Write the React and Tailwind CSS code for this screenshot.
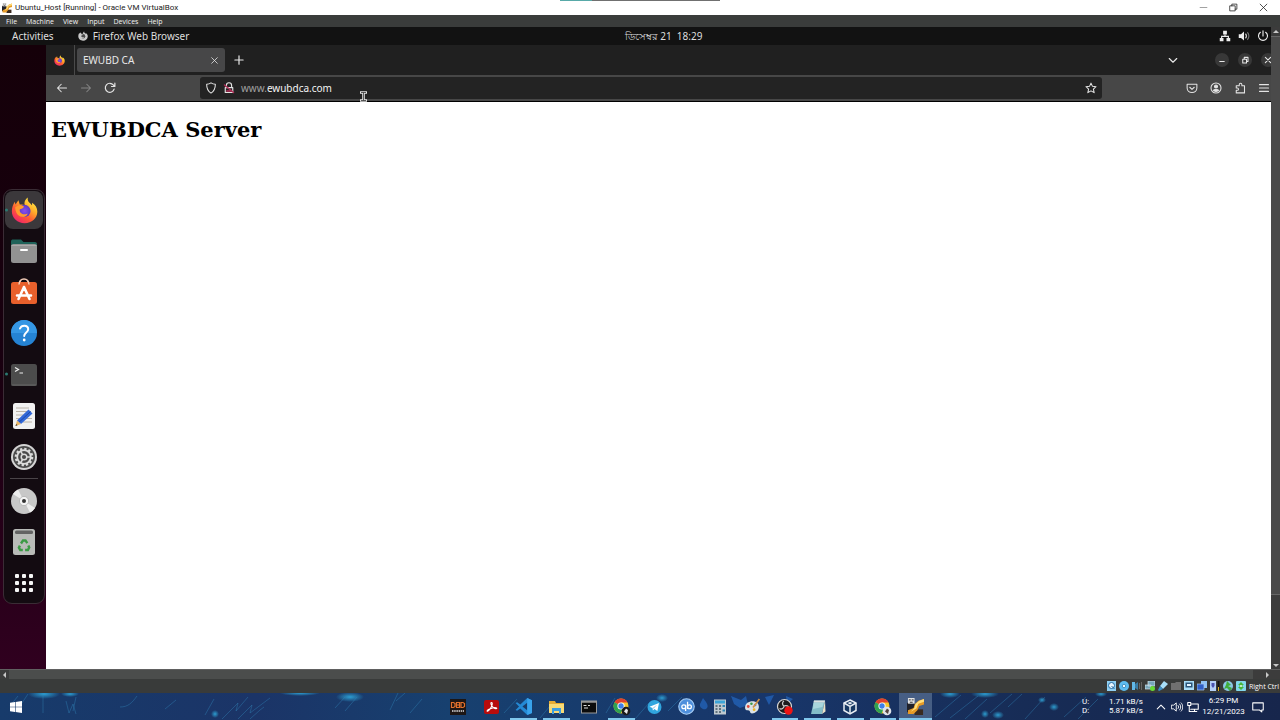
import clsx from "clsx";

const Firefox = ({ size, mono = false }) => (
  <svg width={size} height={size} viewBox="0 0 32 32" aria-hidden="true">
    <defs>
      <linearGradient id="fxBody" x1="0.85" y1="0.05" x2="0.2" y2="0.95">
        <stop offset="0" stopColor="#fff04a" />
        <stop offset="0.35" stopColor="#ffb02a" />
        <stop offset="0.65" stopColor="#ff5b33" />
        <stop offset="1" stopColor="#f0246b" />
      </linearGradient>
      <radialGradient id="fxGlobe">
        <stop offset="0" stopColor="#8a4df0" />
        <stop offset="1" stopColor="#5a3bc4" />
      </radialGradient>
    </defs>
    <path
      fill={mono ? "#c9c9c9" : "url(#fxBody)"}
      d="M20 .5c-.8 2.400.2 4.600 2 6.200 1.200 1 2 2 2.500 3.200.6-1 .7-2 .4-3.200C29 9 31.200 13 31.200 17.500 31 25.500 24.500 31 16.200 31 7.800 31 1 25 1 16.800 1 12 2.600 8.500 4.500 5.500l.8 3.400L8.800 3.800l1.600 5.100c2.500-.4 4.500 0 6.200 1C15 7 16.500 3 20 .5z"
    />
    <circle cx="16" cy="16.500" r="7.200" fill={mono ? "#4a4a4a" : "url(#fxGlobe)"} />
    <path
      fill={mono ? "#c9c9c9" : "#ff9a2e"}
      d="M5 12c3-2 7-2.500 10.500-.8-1 2.300-3.200 2.800-5 3.300-.6 2 .3 4.500 3 5.500 2.800.9 5.200-.2 6.300-.5-.8 3-3.800 4.500-6.800 4C8 22.700 5 18 5 12z"
    />
  </svg>
);

const FilesIcon = () => (
  <svg width="28" height="28" viewBox="0 0 28 28" aria-hidden="true">
    <path fill="#1f6259" d="M1 4.500C1 3 2 2.500 3 2.500h8l2.500 2.500H25c1.500 0 2 1 2 2V14H1z" />
    <rect x="1" y="7" width="26" height="19" rx="2.500" fill="#929292" />
    <path d="M1.500 8.500h25" stroke="#aaa" />
    <path d="M11 13h6" stroke="#fff" strokeWidth="2" strokeLinecap="round" />
  </svg>
);

const SoftwareIcon = () => (
  <svg width="28" height="28" viewBox="0 0 28 28" aria-hidden="true">
    <path d="M9 7c0-3.500 2-6 5-6s5 2.500 5 6" fill="none" stroke="#f3cdb8" strokeWidth="1.500" />
    <rect x="1" y="4" width="26" height="22" rx="2.500" fill="#e8602c" />
    <path d="M9 6.500c0-2 1-3.500 2-4.500M19 6.500c0-2-1-3.500-2-4.500" fill="none" stroke="#f3cdb8" strokeWidth="1.500" />
    <path d="M14 9L8.500 21M14 9L19.500 21M7 17.500h14" fill="none" stroke="#fff" strokeWidth="2.600" strokeLinecap="round" />
  </svg>
);

const HelpIcon = () => (
  <svg width="28" height="28" viewBox="0 0 28 28" aria-hidden="true">
    <circle cx="14" cy="14" r="13" fill="#2583d3" />
    <path d="M1 14a13 13 0 0 1 26 0z" fill="#3597e4" />
    <path d="M10 9.500c.8-2 2.300-2.800 4.200-2.800 2.500 0 4 1.500 4 3.500 0 3.200-4 3.300-4 6.800" fill="none" stroke="#fff" strokeWidth="2" strokeLinecap="round" />
    <circle cx="14.200" cy="21" r="1.400" fill="#fff" />
  </svg>
);

const TerminalIcon = () => (
  <svg width="28" height="28" viewBox="0 0 28 28" aria-hidden="true">
    <rect x="1" y="4" width="26" height="22" rx="2.500" fill="#4c4c4c" />
    <path d="M1.500 25h25" stroke="#666" />
    <path d="M5 7.500l3.500 2-3.500 2M9.500 13H13" fill="none" stroke="#eee" strokeWidth="1.200" />
  </svg>
);

const EditorIcon = () => (
  <svg width="28" height="28" viewBox="0 0 28 28" aria-hidden="true">
    <rect x="3" y="2" width="22" height="26" rx="2.500" fill="#f1f1f1" />
    <path d="M6 7h13M6 10.500h15M6 14h8M6 17.500h5M15 17.500h7M13 21h9" stroke="#b9b2a8" />
    <path d="M18.500 8.500l4 4L11 23l-4-3.500z" fill="#3268d8" />
    <path d="M20.500 10.500L9 21.300" stroke="#1d49a8" />
    <path d="M7 19.500L11 23l-5.500 2z" fill="#e8b565" />
    <path d="M5.500 25l.7-2 1.300 1.200z" fill="#333" />
  </svg>
);

const SettingsIcon = () => (
  <svg width="28" height="28" viewBox="0 0 28 28" aria-hidden="true">
    <circle cx="14" cy="15" r="13" fill="#d4d4d4" />
    <circle cx="14" cy="15" r="11" fill="#4b4b4b" />
    <circle cx="14" cy="15" r="8" fill="none" stroke="#dcdcdc" strokeWidth="2.600" strokeDasharray="2.200 1.990" />
    <circle cx="14" cy="15" r="6.800" fill="none" stroke="#dcdcdc" strokeWidth="1.800" />
    <circle cx="14" cy="15" r="2.800" fill="none" stroke="#dcdcdc" strokeWidth="1.500" />
    <path d="M17 15h4M12.500 12.400l-2-3.400M12.500 17.600l-2 3.400" stroke="#dcdcdc" strokeWidth="1.500" />
  </svg>
);

const DiscIcon = () => (
  <svg width="28" height="28" viewBox="0 0 28 28" aria-hidden="true">
    <circle cx="14" cy="14" r="13" fill="#c8c8c8" />
    <path d="M14 14L3 7a13 13 0 0 1 5-4.500zM14 14l11 7a13 13 0 0 1-5 4.500z" fill="#ededed" />
    <circle cx="14" cy="14" r="4.600" fill="#f4f4f4" stroke="#aaa" strokeWidth="0.700" />
    <circle cx="14" cy="14" r="2" fill="#333" />
  </svg>
);

const TrashIcon = () => (
  <svg width="28" height="28" viewBox="0 0 28 28" aria-hidden="true">
    <rect x="3" y="1" width="22" height="26" rx="2.500" fill="#b9bbb8" />
    <rect x="5" y="2.500" width="18" height="3.500" rx="1.500" fill="#636363" />
    <g fill="none" stroke="#3c9a45" strokeWidth="2.400">
      <path d="M11 15.500l2-3h2.500l1.800 2.600" />
      <path d="M18.300 17.500l.9 2-1.300 2.500h-2.800" />
      <path d="M12.800 22h-2.500l-1.400-2.400 1-2" />
    </g>
  </svg>
);

const GridIcon = () => (
  <svg width="28" height="28" viewBox="0 0 28 28" aria-hidden="true" fill="#f5f5f5">
    {[5, 12, 19].map((y) =>
      [5, 12, 19].map((x) => <rect key={`${x}-${y}`} x={x} y={y} width="4" height="4" rx="1" />)
    )}
  </svg>
);

const dockItems = [
  { name: "Firefox Web Browser", icon: <Firefox size={27} />, active: true, running: true },
  { name: "Files", icon: <FilesIcon /> },
  { name: "Ubuntu Software", icon: <SoftwareIcon /> },
  { name: "Help", icon: <HelpIcon /> },
  { name: "Terminal", icon: <TerminalIcon />, running: true },
  { name: "Text Editor", icon: <EditorIcon /> },
  { name: "Settings", icon: <SettingsIcon />, last: true },
  { name: "Disc", icon: <DiscIcon /> },
  { name: "Trash", icon: <TrashIcon /> },
  { name: "Show Applications", icon: <GridIcon /> },
];

// small line icons, all on a 16px grid
const Line = ({ size = 12, width = 1.4, className, children }) => (
  <svg
    width={size}
    height={size}
    viewBox="0 0 16 16"
    fill="none"
    stroke="currentColor"
    strokeWidth={width}
    strokeLinecap="round"
    strokeLinejoin="round"
    className={className}
    aria-hidden="true"
  >
    {children}
  </svg>
);

const VBoxLogo = ({ size }) => (
  <svg width={size} height={size} viewBox="0 0 18 18" aria-hidden="true">
    <path d="M0 5h7l3 4-4 6H0z" fill="#20222b" />
    <path d="M8 12h9v6H8z" fill="#3a2a20" />
    <path d="M1 0h7v6H1z" fill="#e4e4e4" />
    <path d="M2 2h2M5 2h2M3 4.500h3" stroke="#333" />
    <path d="M18 1v6l-5 1.500-2 4.500-4 4H1v-4l6-2.500 1-3.500 4-4z" fill="#e79a25" />
    <path d="M18 1v3l-6 2-2 5-6 3.500 4-4.500 1-4 4-3z" fill="#ffdf7a" />
  </svg>
);

const Chrome = ({ dark }) => (
  <svg width="18" height="18" viewBox="0 0 18 18" aria-hidden="true">
    <circle cx="8" cy="8" r="7.500" fill="#f4c52c" />
    <path d="M8 8L1.500 4.300A7.500 7.500 0 0 1 14.600 4.500H8z" fill="#e0402f" />
    <path d="M1.500 4.300A7.500 7.500 0 0 0 7.500 15.500L10 10.500 8 8z" fill="#2ea352" />
    <circle cx="8" cy="8" r="3.600" fill="#fff" />
    <circle cx="8" cy="8" r="2.700" fill="#3d7fe8" />
    <circle cx="13" cy="13" r="4.300" fill={dark ? "#1b1b1b" : "#dfe3e8"} />
    <path d="M11 13.500l2-3 2 1.500-1 4z" fill={dark ? "#e9e9e9" : "#54453f"} />
  </svg>
);

const taskItems = [
  {
    name: "Game launcher",
    icon: (
      <svg width="16" height="16" viewBox="0 0 16 16" aria-hidden="true">
        <rect width="16" height="16" fill="#1d1614" />
        <path d="M1.500 3.500h2l1.500 1v3l-1.500 1h-2zM6.500 3.500h3v5h-3zM6.500 6h3M11 3.500h2l1.500 1v3l-1.500 1h-2z" fill="none" stroke="#e0702c" strokeWidth="1.200" />
        <path d="M2 12h12" stroke="#ddd" strokeDasharray="1.500 .7" strokeWidth="1.500" />
      </svg>
    ),
  },
  {
    name: "Acrobat Reader",
    icon: (
      <svg width="16" height="16" viewBox="0 0 16 16" aria-hidden="true">
        <rect x="1" y="1" width="15" height="14" rx="2" fill="#b70c0c" />
        <path d="M8.500 3.500c-1.500 0 0 3.500 2 5.200s4 1 3 .3c-1.500-1-6 .3-8 1.500s-1.700 2.200-.5 1.500C7 11 9.500 6 9.300 4.500 9.200 4 9 3.500 8.500 3.500z" fill="none" stroke="#fff" strokeWidth="1.100" />
      </svg>
    ),
  },
  {
    name: "Visual Studio Code",
    open: true,
    icon: (
      <svg width="17" height="17" viewBox="0 0 16 16" aria-hidden="true">
        <path d="M11.500 0L16 2v12l-4.500 2L5 9.800 2 12 .5 11.200 3.800 8 .5 4.800 2 4l3 2.200z" fill="#2489d4" />
        <path d="M11.500 4.500v7L7 8z" fill="#173a68" />
        <path d="M11.500 0L16 2v12l-4.500 2z" fill="#38a3ec" />
      </svg>
    ),
  },
  {
    name: "File Explorer",
    open: true,
    icon: (
      <svg width="16" height="16" viewBox="0 0 16 16" aria-hidden="true">
        <path d="M1 2h6l1 2h8v10H1z" fill="#e7ad35" />
        <path d="M1 5h15v9H1z" fill="#f9db76" />
        <path d="M4 9h9v6h-2v-3H6v3H4z" fill="#3d9fe0" />
      </svg>
    ),
  },
  {
    name: "Command Prompt",
    icon: (
      <svg width="16" height="16" viewBox="0 0 16 16" aria-hidden="true">
        <rect x=".5" y="2" width="15" height="12" fill="#0b0b0b" stroke="#9a9a9a" />
        <path d="M1 3h14" stroke="#ddd" />
        <path d="M2.500 6.500h3M7 6.500h2M3 9h4" stroke="#ddd" />
      </svg>
    ),
  },
  { name: "Google Chrome", open: true, icon: <Chrome dark /> },
  {
    name: "Telegram",
    icon: (
      <svg width="16" height="16" viewBox="0 0 16 16" aria-hidden="true">
        <circle cx="8.500" cy="8" r="7" fill="#31a6de" />
        <path d="M3.500 7.800l9.500-3.700-1.600 8-3-2-1.500 1.500-.4-2.600z" fill="#fff" />
        <path d="M6.500 9l4.500-3.300-3.200 4" fill="#a9cfe6" />
      </svg>
    ),
  },
  {
    name: "qBittorrent",
    icon: (
      <svg width="17" height="17" viewBox="0 0 16 16" aria-hidden="true">
        <circle cx="8" cy="8" r="7.300" fill="#4e8fdc" stroke="#a7cdf3" />
        <g fill="none" stroke="#fff" strokeWidth="1.200">
          <circle cx="5.400" cy="8.200" r="1.800" />
          <path d="M7.200 6.300v6M9 3.500v6.800" />
          <circle cx="10.800" cy="8.200" r="1.800" />
        </g>
      </svg>
    ),
  },
  {
    name: "Calculator",
    icon: (
      <svg width="16" height="16" viewBox="0 0 16 16" aria-hidden="true">
        <rect x="2" y=".5" width="12" height="15" fill="#bfc9d0" />
        <rect x="3" y="1.500" width="10" height="3" fill="#3ca5d8" />
        <path d="M3.500 7h2M7 7h2M3.500 10h2M7 10h2M3.500 13h2M7 13h2" stroke="#61727d" strokeWidth="1.800" />
        <path d="M10.500 7h2.500M10.500 11.500h2.500" stroke="#2c86b6" strokeWidth="2.200" />
      </svg>
    ),
  },
  {
    name: "Paint",
    icon: (
      <svg width="17" height="17" viewBox="0 0 16 16" aria-hidden="true">
        <path d="M1 9c0-4 3.500-6 7-6s6 2 6 5.500-3.500 6-6.500 6c-2 0-1.500-2-2.500-2.500S1 12.500 1 9z" fill="#dbe2e6" />
        <circle cx="4" cy="8" r="1.300" fill="#e24a3c" />
        <circle cx="7" cy="5.500" r="1.200" fill="#3d9b4a" />
        <circle cx="10.500" cy="6.500" r="1.200" fill="#3b78d0" />
        <circle cx="9.500" cy="11" r="1.300" fill="#edb528" />
        <path d="M14.500 1L8.500 9" stroke="#cf9146" strokeWidth="1.500" />
      </svg>
    ),
  },
  {
    name: "OBS Studio",
    open: true,
    icon: (
      <svg width="18" height="18" viewBox="0 0 18 18" aria-hidden="true">
        <circle cx="8.500" cy="8.500" r="7" fill="#1c1c1e" stroke="#d5d5d5" strokeWidth="1.200" />
        <path d="M8 3c-2 1-2 4 0 5 2-1 5 0 5 2M8 8c0 2-2.500 4-4.500 2.500" fill="none" stroke="#ccc" strokeWidth="1.300" />
        <circle cx="12.500" cy="12.500" r="4.200" fill="#ee1414" />
      </svg>
    ),
  },
  {
    name: "Notepad",
    open: true,
    icon: (
      <svg width="16" height="16" viewBox="0 0 16 16" aria-hidden="true">
        <path d="M4 1.500h11L12 15H1z" fill="#84bdc8" />
        <path d="M4 1.500h11l-.5 2h-11z" fill="#d9dfe0" />
        <path d="M3.500 4h10l-1 4-9.500 2z" fill="#a9d6dc" />
        <path d="M12 15l3-13.500.5 11z" fill="#e9e2c8" />
      </svg>
    ),
  },
  {
    name: "VirtualBox Manager",
    open: true,
    icon: (
      <svg width="16" height="16" viewBox="0 0 16 16" aria-hidden="true">
        <path d="M8 1l6 3v7.500L8 15l-6-3.500V4z" fill="#173863" stroke="#e8edf4" strokeWidth="1.500" />
        <path d="M2 4l6 3.500L14 4M8 7.500V15" fill="none" stroke="#e8edf4" strokeWidth="1.500" />
        <path d="M5.500 4L8 3l2.500 1L8 5.500z" fill="#e8edf4" />
      </svg>
    ),
  },
  { name: "Google Chrome, second profile", open: true, icon: <Chrome /> },
  { name: "Ubuntu_Host", open: true, active: true, icon: <VBoxLogo size={17} /> },
];

const statusIcons = [
  {
    name: "Hard disks",
    draw: (
      <>
        <rect x="1" width="9" height="10" fill="#8fd0f4" />
        <circle cx="5.500" cy="4.500" r="3" fill="#e8f6ff" stroke="#2369a0" />
        <path d="M5.500 5l3 3" stroke="#2369a0" />
      </>
    ),
  },
  {
    name: "Optical drives",
    draw: (
      <>
        <circle cx="5" cy="5" r="5" fill="#5dbcf0" />
        <circle cx="5" cy="5" r="1.700" fill="#eaf8ff" stroke="#2475ab" strokeWidth=".7" />
      </>
    ),
  },
  {
    name: "Audio",
    draw: (
      <>
        <path d="M0 1h3v8H0z" fill="#62b8e7" />
        <path d="M3 3l3-2v8L3 7z" fill="#397ca5" />
        <path d="M7.500 2v6M9.500 1v8" stroke="#666" />
      </>
    ),
  },
  {
    name: "Network",
    draw: (
      <>
        <path d="M3 0h7v5H3zM0 4h6v4H0z" fill="#78a7bb" stroke="#d5e7ef" strokeWidth=".7" />
        <circle cx="7.500" cy="7.500" r="2.500" fill="#67dc35" />
      </>
    ),
  },
  {
    name: "USB devices",
    draw: (
      <>
        <path d="M6 0l4 3-5 5-3-3z" fill="#a9e0fa" />
        <path d="M2 5l3 3-4 2-1-1z" fill="#3c8fc6" />
      </>
    ),
  },
  { name: "Shared folders", draw: <path d="M0 2h4l1-1h5v8H0z" fill="#707070" /> },
  {
    name: "Display",
    draw: (
      <>
        <rect width="10" height="9" fill="#a9ddf8" />
        <rect x="1.500" y="1.500" width="7" height="5" fill="#2c5578" />
        <path d="M3 4h4" stroke="#e5f5ff" strokeWidth="2" />
      </>
    ),
  },
  {
    name: "Recording",
    draw: (
      <>
        <path d="M4 0h6v7H4z" fill="#8fc2f5" />
        <path d="M0 3h7v6H0z" fill="#3160c7" stroke="#a3c8f5" strokeWidth=".7" />
      </>
    ),
  },
  {
    name: "Processor",
    draw: (
      <>
        <rect width="6" height="10" fill="#b4cff7" />
        <path d="M1.500 2h3v3L3 7 1.500 5z" fill="#4a53af" />
        <path d="M8.500 0v10" stroke="#111" strokeWidth="2" />
        <path d="M8.500 6v4" stroke="#e0b020" strokeWidth="1" />
      </>
    ),
  },
  {
    name: "Mouse integration",
    draw: (
      <>
        <circle cx="5" cy="5" r="5" fill="#8cc9e6" />
        <path d="M4 0l4 4-3 1 4 2-2 3-3-3-3 1 2-4z" fill="#3fae3b" />
      </>
    ),
  },
  {
    name: "Keyboard capture",
    draw: (
      <>
        <rect width="10" height="10" rx="1" fill="#82d8ec" />
        <path d="M5 1l3 3-1.500 0v2H8L5 9 2 6h1.500V4H2z" fill="#46b63a" />
        <circle cx="5" cy="5" r="1" fill="#e8ffe8" />
      </>
    ),
  },
];

function HostTitleBar() {
  return (
    <header className="relative flex h-[15px] shrink-0 items-center bg-white pl-[2px] pr-[2px]">
      <VBoxLogo size={10} />
      <h1 className="ml-[3px] font-['Roboto',sans-serif] text-[8px] leading-none text-[#222]">
        Ubuntu_Host [Running] - Oracle VM VirtualBox
      </h1>
      <div className="absolute left-1/2 top-0 flex h-px w-40 -translate-x-1/2 bg-[#707070]">
        <span className="h-px w-8 bg-[#58a9a8]" />
      </div>
      <div className="ml-auto flex text-[#222]">
        <button aria-label="Minimize" className="flex w-[30px] justify-center">
          <Line size={9}><path d="M2 8h12" stroke="#888" /></Line>
        </button>
        <button aria-label="Restore" className="flex w-[30px] justify-center">
          <Line size={9}><path d="M2 5h9v9H2zM5 5V2h9v9h-3" /></Line>
        </button>
        <button aria-label="Close" className="flex w-[30px] justify-center">
          <Line size={9}><path d="M2 2l12 12M14 2L2 14" /></Line>
        </button>
      </div>
    </header>
  );
}

function MenuBar() {
  return (
    <nav className="flex h-3 shrink-0 items-center gap-[9px] bg-[#3a3c3b] pl-[6px] text-[7px] leading-none text-[#f2f2f2]">
      {["File", "Machine", "View", "Input", "Devices", "Help"].map((m) => (
        <button key={m}>{m}</button>
      ))}
    </nav>
  );
}

function GnomeBar() {
  return (
    <div className="grid h-[18px] shrink-0 grid-cols-[1fr_auto_1fr] items-center bg-[#121212] text-[10px] leading-none text-[#dedede]">
      <div className="flex items-center gap-6 pl-3">
        <button>Activities</button>
        <button className="flex items-center gap-[5px]">
          <Firefox size={10} mono />
          Firefox Web Browser
        </button>
      </div>
      {/* the guest screen is wider than the visible part, so its clock sits right of centre */}
      <button className="whitespace-pre pl-14">ডিসেম্বর 21  18:29</button>
      <div className="flex items-center justify-end gap-[7px] pr-[2px] text-[#eee]">
        <svg width="12" height="12" viewBox="0 0 16 16" fill="currentColor" aria-hidden="true">
          <path d="M5.500 1h5v5h-5zM1 10.500h5V15H1zM10 10.500h5V15h-5z" />
          <path d="M8 6v2.500M3.500 11V8.500h9V11" fill="none" stroke="currentColor" strokeWidth="1.500" />
        </svg>
        <svg width="12" height="12" viewBox="0 0 16 16" fill="currentColor" aria-hidden="true">
          <path d="M1 5.500h3L8 2v12l-4-3.500H1z" />
          <path d="M10 5c1.500 1.500 1.500 4.500 0 6" fill="none" stroke="currentColor" strokeWidth="1.500" />
          <path d="M12.500 3c2.700 2.700 2.700 7.300 0 10" fill="none" stroke="#777" strokeWidth="1.500" />
        </svg>
        <Line width={1.5}>
          <path d="M8 1v7M4.500 3a6 6 0 1 0 7 0" />
        </Line>
      </div>
    </div>
  );
}

function Dock() {
  return (
    <aside className="flex w-[46px] shrink-0 flex-col bg-linear-to-b from-[#150009] via-[#18000f] to-[#30001f] pl-[3px] pt-36">
      <nav className="flex w-[42px] flex-col items-center gap-[3px] rounded-[9px] border border-[#3a2c35] bg-[#130b11] py-px">
        {dockItems.map((item) => (
          <div key={item.name} className="contents">
            <button
              aria-label={item.name}
              className={clsx(
                "relative flex size-[38px] shrink-0 items-center justify-center rounded-lg",
                item.active && "bg-[#3b383b]"
              )}
            >
              {item.icon}
              {item.running && (
                <span className="absolute left-0 top-1/2 size-[3px] -translate-y-1/2 rounded-full bg-[#2b7a72]" />
              )}
            </button>
            {item.last && <hr className="w-7 border-[#4a4448]" />}
          </div>
        ))}
      </nav>
    </aside>
  );
}

function TabStrip() {
  return (
    <div className="flex h-[30px] shrink-0 items-center bg-[#202020] text-[#e8e8e8]">
      <button aria-label="Firefox View" className="flex h-full w-[29px] items-center justify-center border-r border-[#4a4a4a] pr-[2px]">
        <Firefox size={11} />
      </button>
      <div className="ml-[2px] flex h-6 w-[148px] items-center justify-between rounded-[3px] bg-[#474748] pl-[6px] pr-[6px] text-[10px]">
        <span>EWUBD CA</span>
        <button aria-label="Close tab">
          <Line size={9}><path d="M3 3l10 10M13 3L3 13" /></Line>
        </button>
      </div>
      <button aria-label="New tab" className="ml-2">
        <Line size={12} width={1.6}><path d="M8 2.500v11M2.500 8h11" /></Line>
      </button>
      <button aria-label="List all tabs" className="ml-auto mr-9">
        <Line size={12} width={1.5}><path d="M3 6l5 5 5-5" /></Line>
      </button>
      <div className="-mr-1 flex shrink-0 gap-[9px]">
        {[
          ["Minimize window", "M5 10h6"],
          ["Restore window", "M5 7h5v5H5zM7 7V4.500h5V10h-2"],
          ["Close window", "M4.500 4.500l7 7M11.500 4.500l-7 7"],
        ].map(([label, d]) => (
          <button key={label} aria-label={label} className="flex size-[14px] items-center justify-center rounded-full bg-[#383838]">
            <Line size={12}><path d={d} /></Line>
          </button>
        ))}
      </div>
    </div>
  );
}

function Toolbar() {
  return (
    <div className="flex h-[26px] shrink-0 items-center bg-[#474747] text-[#e4e4e4]">
      <div className="flex w-[154px] shrink-0 items-center gap-3 pl-[10px]">
        <button aria-label="Back">
          <Line><path d="M14 8H2M7 3L2 8l5 5" /></Line>
        </button>
        <button aria-label="Forward" className="text-[#858585]">
          <Line><path d="M2 8h12M9 3l5 5-5 5" /></Line>
        </button>
        <button aria-label="Reload">
          <Line width={1.6}><path d="M13.500 9.500A6 6 0 1 1 12.500 4L14 5.500M14.500 1.500v4.500H10" /></Line>
        </button>
      </div>
      <form className="relative flex h-[22px] flex-1 items-center rounded-[3px] bg-[#232323] pl-[5px] pr-[5px]">
        <Line width={1.4}><path d="M8 1.200c2 1.300 4 1.700 5.800 1.800 0 5.500-1.300 9.300-5.800 11.800C3.500 12.300 2.200 8.500 2.200 3 4 2.900 6 2.500 8 1.200z" /></Line>
        <Line width={1.5} className="ml-[6px]">
          <path d="M4.500 7.500V4.500a3.500 3.500 0 0 1 7 0v3M3 7.500h10V14H3z" />
          <path d="M2 4l12 10M5 12h6" stroke="#b32d58" strokeWidth="2" />
        </Line>
        <label htmlFor="address" className="ml-[6px] text-[10px] text-[#a0a0a0]">www.</label>
        <input
          id="address"
          type="text"
          defaultValue="ewubdca.com"
          className="min-w-0 flex-1 bg-transparent text-[10px] text-[#f4f4f4] outline-none"
        />
        <button type="button" aria-label="Bookmark this page">
          <Line><path d="M8 1.500l2 4.300 4.700.5-3.500 3.200 1 4.700L8 11.800l-4.200 2.400 1-4.700L1.300 6.300l4.700-.5z" /></Line>
        </button>
        <svg className="absolute left-40 top-[14px]" width="7" height="11" viewBox="0 0 7 11" aria-hidden="true">
          <path d="M0 1.500h7M3.500 1v9M0 9.500h7" stroke="#e4e4e4" strokeWidth="2.600" />
          <path d="M1 1.500h5M3.500 1v9M1 9.500h5" stroke="#4a4a4a" strokeWidth="0.900" />
        </svg>
      </form>
      <div className="flex w-[169px] shrink-0 items-center justify-end gap-3 pr-px">
        <button aria-label="Save to Pocket">
          <Line><path d="M1.500 3h13v5c0 3.500-3 6-6.500 6s-6.500-2.500-6.500-6zM5 7l3 2.800L11 7" /></Line>
        </button>
        <button aria-label="Account">
          <Line>
            <circle cx="8" cy="8" r="6.700" />
            <circle cx="8" cy="6" r="2" fill="currentColor" />
            <path d="M4.500 11c1-1.500 6-1.500 7 0-1 2-6 2-7 0z" fill="currentColor" />
          </Line>
        </button>
        <button aria-label="Extensions">
          <Line><path d="M3 14.500v-3.500h1.500c2 0 2-3 0-3H3V5h4V3.500c0-2.300 3.500-2.300 3.500 0V5H14v9.500z" /></Line>
        </button>
        <button aria-label="Open application menu">
          <Line><path d="M2 3.500h12M2 8h12M2 12.500h12" /></Line>
        </button>
      </div>
    </div>
  );
}

const arrow = {
  up: "M1 5l3-3 3 3z",
  down: "M1 3l3 3 3-3z",
  left: "M5 1L2 4l3 3z",
  right: "M3 1l3 3-3 3z",
};

const ScrollButton = ({ dir }) => (
  <button aria-label={`Scroll ${dir}`} className="flex size-[9px] shrink-0 items-center justify-center bg-[#3c3c3c]">
    <svg width="8" height="8" viewBox="0 0 8 8" aria-hidden="true">
      <path d={arrow[dir]} fill="#c8c8c8" />
    </svg>
  </button>
);

function StatusBar() {
  return (
    <footer className="flex h-[14px] shrink-0 items-center justify-end gap-[3px] bg-[#393b3a]">
      {statusIcons.map((s) => (
        <button key={s.name} aria-label={s.name}>
          <svg width="10" height="10" viewBox="0 0 10 10" aria-hidden="true">{s.draw}</svg>
        </button>
      ))}
      <span className="whitespace-nowrap pr-px text-[7px] leading-none text-white">Right Ctrl</span>
    </footer>
  );
}

function Wallpaper() {
  return (
    <svg className="absolute inset-0 size-full" viewBox="0 0 1280 27" preserveAspectRatio="none" aria-hidden="true">
      <defs>
        <linearGradient id="sea">
          <stop offset="0" stopColor="#173b6b" />
          <stop offset="0.2" stopColor="#1b3467" />
          <stop offset="0.35" stopColor="#17406f" />
          <stop offset="0.6" stopColor="#18366a" />
          <stop offset="0.8" stopColor="#172c56" />
          <stop offset="1" stopColor="#17264c" />
        </linearGradient>
        <radialGradient id="glow">
          <stop offset="0" stopColor="#2fa8dc" stopOpacity="0.900" />
          <stop offset="1" stopColor="#2fa8dc" stopOpacity="0" />
        </radialGradient>
      </defs>
      <rect width="1280" height="27" fill="url(#sea)" />
      <g fill="url(#glow)">
        <ellipse cx="44" cy="1" rx="16" ry="5" />
        <ellipse cx="70" cy="1" rx="9" ry="3" />
        <ellipse cx="215" cy="21" rx="4" ry="4" />
        <ellipse cx="300" cy="0" rx="20" ry="3" />
        <ellipse cx="350" cy="4" rx="14" ry="5" />
        <ellipse cx="662" cy="5" rx="6" ry="4" />
        <ellipse cx="985" cy="1" rx="14" ry="4" />
        <ellipse cx="950" cy="1" rx="10" ry="4" />
        <ellipse cx="1054" cy="14" rx="5" ry="4" />
        <ellipse cx="1042" cy="7" rx="4" ry="3" />
        <ellipse cx="998" cy="22" rx="6" ry="4" />
        <ellipse cx="985" cy="21" rx="4" ry="4" />
        <ellipse cx="1101" cy="1" rx="6" ry="3" />
      </g>
      <g fill="none" stroke="#3187bb" strokeOpacity="0.400">
        <path d="M43 2v18M66 8l3 12 4-9 3 10M76 4l-3 14M18 3l-8 10M28 1l-6 9M120 14c8 0 12-4 17-11M165 16l11-9" />
        <path d="M222 26l16-16-2 8 12-14M238 26l14-14-2 8 20-15M250 26l10-9 4-3M205 22l9-16" />
        <path d="M335 15l10-11M345 18l12-14M390 17l8-17M396 8l9-8M410 20l12-14" />
        <path d="M935 24l26-22M950 25l28-22M965 26l22-20M990 20l22-19M1008 14l14-13M1064 24l22-20M1078 26l20-20M1025 26l20-22" />
        <path d="M504 20l13-14M540 25l10-12M606 20l9-15M635 26l14-16M668 18l14-14" />
      </g>
      <g fill="#2770cf" fillOpacity="0.600">
        <path d="M703 5c3 4 6 7 4 10s-8 0-7-4zM731 3l10 4 5-4 2 9-8 3-6-4zM765 4l9-2-5 10zM786 3l7 3-6 5z" />
      </g>
    </svg>
  );
}

function Taskbar() {
  return (
    <div className="relative h-[27px] shrink-0 overflow-hidden font-['Roboto',sans-serif] text-[8px] leading-none text-white">
      <Wallpaper />
      <div className="relative grid h-full grid-cols-[442px_490px_1fr]">
        <div className="flex items-center pl-[10px]">
          <button aria-label="Start">
            <svg width="12" height="12" viewBox="0 0 12 12" fill="#fff" aria-hidden="true">
              <path d="M0 1.700l5-.7v4.700H0zM5.600.9L12 0v5.700H5.600zM0 6.300h5V11l-5-.7zM5.600 6.300H12V12l-6.400-.9z" />
            </svg>
          </button>
        </div>
        <div className="grid grid-cols-15">
          {taskItems.map((t) => (
            <button
              key={t.name}
              aria-label={t.name}
              className={clsx("relative flex items-center justify-center", t.active && "bg-[#5b7294]/70")}
            >
              {t.icon}
              {t.open && (
                <span
                  className={clsx(
                    "absolute bottom-0 h-[2px] bg-[#80c7ec]",
                    t.active ? "inset-x-0" : "inset-x-[3px]"
                  )}
                />
              )}
            </button>
          ))}
        </div>
        <div className="flex items-center justify-end">
          <dl className="mr-3 grid grid-cols-[27px_auto] gap-y-[1px]">
            <dt>U:</dt>
            <dd>1.71 kB/s</dd>
            <dt>D:</dt>
            <dd>5.87 kB/s</dd>
          </dl>
          <div className="flex items-center gap-1">
            <button aria-label="Show hidden icons">
              <Line><path d="M3 10.500l5-5 5 5" /></Line>
            </button>
            <button aria-label="Volume">
              <Line width={1.2}><path d="M1 5.500h2.500L7 2.500v11L3.500 10.500H1zM9.500 6c1 1 1 3 0 4M11.500 4c2 2 2 6 0 8M13.500 2.500c3 3 3 8 0 11" /></Line>
            </button>
            <button aria-label="Network">
              <Line width={1.4}><path d="M5 4h10v7H5M10 11v3M7 14h6M1 2h4v4H1zM3 6v8h3" /></Line>
            </button>
          </div>
          <div className="mx-1 flex w-[41px] flex-col items-center gap-[3px]">
            <time>6:29 PM</time>
            <time>12/21/2023</time>
          </div>
          <button aria-label="Notifications" className="ml-1 mr-4">
            <Line width={1.4}><path d="M1 2.500h14v9.500h-2v2.500l-3-2.500H1z" /></Line>
          </button>
        </div>
      </div>
    </div>
  );
}

export default function App() {
  return (
    <div className="flex h-screen flex-col overflow-hidden bg-[#393b3a] font-['Open_Sans',sans-serif]">
      <HostTitleBar />
      <MenuBar />
      <div className="flex min-h-0 flex-1">
        <div className="flex min-w-0 flex-1 flex-col overflow-hidden font-['Noto_Sans',sans-serif]">
          <GnomeBar />
          <div className="flex min-h-0 flex-1">
            <Dock />
            <div className="flex min-w-0 flex-1 flex-col overflow-hidden">
              <TabStrip />
              <Toolbar />
              <main className="flex-1 border-t border-black bg-white px-[5px] pt-[14px]">
                <h2 className="font-['DejaVu_Serif',serif] text-[21px] font-bold leading-[28px] text-black">
                  EWUBDCA Server
                </h2>
              </main>
            </div>
          </div>
        </div>
        <div className="flex w-[9px] shrink-0 flex-col bg-[#3c3c3c]">
          <ScrollButton dir="up" />
          <div className="h-[87%] border-y border-[#666] bg-[#4a4a4a]" />
          <div className="flex-1" />
          <ScrollButton dir="down" />
        </div>
      </div>
      <div className="flex h-[10px] shrink-0 items-center border-t border-[#606060] bg-[#3c3c3c] pr-[9px]">
        <ScrollButton dir="left" />
        <div className="h-full flex-1 bg-[#4b4d4c]" />
        <div className="w-[9px]" />
        <ScrollButton dir="right" />
      </div>
      <StatusBar />
      <Taskbar />
    </div>
  );
}
